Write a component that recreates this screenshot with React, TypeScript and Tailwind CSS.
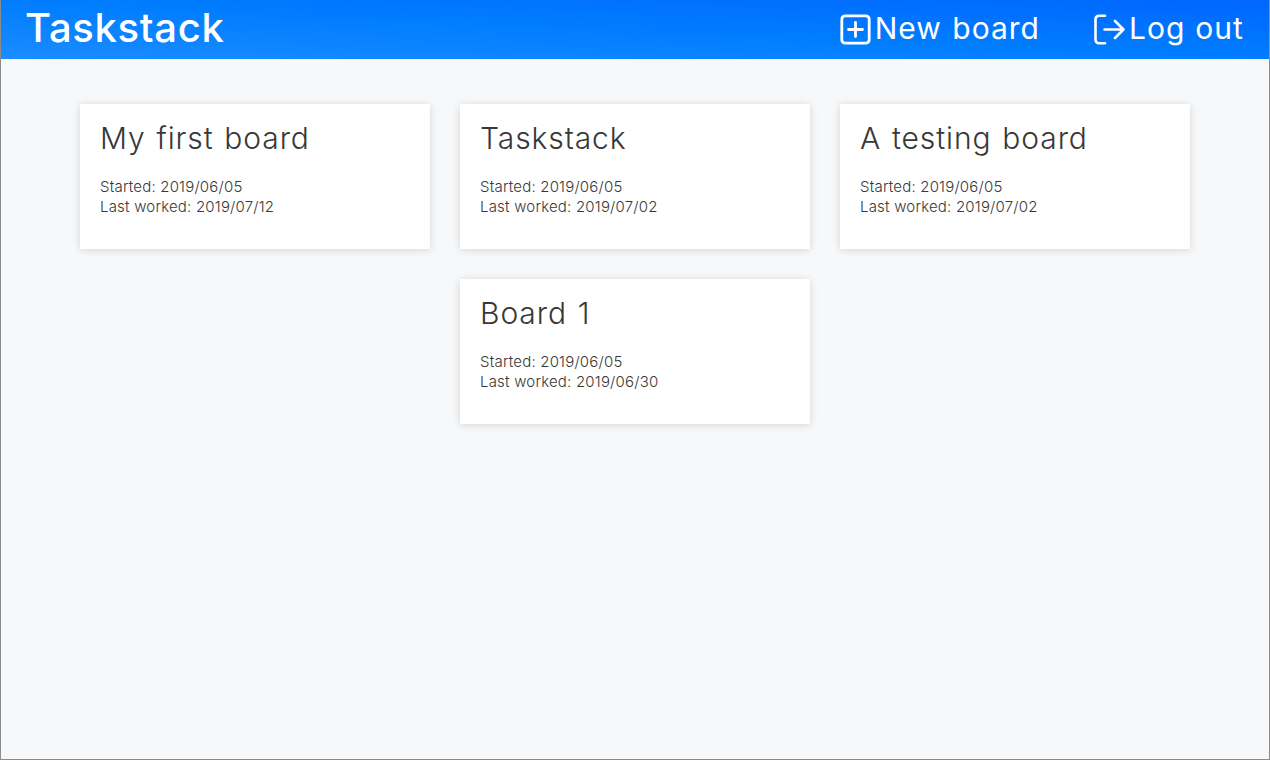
const boards = [
  { title: 'My first board', started: '2019/06/05', worked: '2019/07/12' },
  { title: 'Taskstack', started: '2019/06/05', worked: '2019/07/02' },
  { title: 'A testing board', started: '2019/06/05', worked: '2019/07/02' },
  { title: 'Board 1', started: '2019/06/05', worked: '2019/06/30' },
];

function PlusIcon() {
  return (
    <svg width="31" height="31" viewBox="0 0 31 31" fill="none" stroke="white" strokeWidth="2.8" strokeLinecap="round" strokeLinejoin="round">
      <rect x="1.8" y="1.8" width="27.4" height="27.4" rx="3.5" />
      <path d="M15.5 8.5v14M8.5 15.5h14" />
    </svg>
  );
}

function LogoutIcon() {
  return (
    <svg width="31" height="31" viewBox="0 0 31 31" fill="none" stroke="white" strokeWidth="2.6" strokeLinecap="round" strokeLinejoin="round">
      <path d="M11 1.7H5a3.5 3.5 0 0 0-3.5 3.5v20.6A3.5 3.5 0 0 0 5 29.3h6" />
      <path d="M10.5 15.5h19M21 7l8.5 8.5L21 24" />
    </svg>
  );
}

export default function App() {
  return (
    <div className="flex h-[760px] flex-col border-x border-b border-[#8c8c8c] bg-[#f7f8fa] font-['Inter',sans-serif]">
      <header className="flex h-[59px] items-center justify-between bg-[linear-gradient(to_top_right,#1a8cff,#007dff_50%,#0066ff)] pl-[24px] pr-[25px] text-white">
        <h1 className="mt-[-3px] text-[40px] font-[450] leading-none tracking-[0.7px]">Taskstack</h1>
        <nav className="flex items-center gap-[54px] text-[30px] font-normal leading-none">
          <a className="flex items-center gap-[4px]">
            <PlusIcon />
            <span className="mt-[-3px] tracking-[1px] [word-spacing:1px]">New board</span>
          </a>
          <a className="flex items-center gap-[4px]">
            <LogoutIcon />
            <span className="mt-[-3px] tracking-[1.1px]">Log out</span>
          </a>
        </nav>
      </header>
      <main className="mx-auto flex w-[1110px] flex-wrap justify-center gap-[30px] pt-[45px]">
        {boards.map((board) => (
          <div key={board.title} className="h-[145px] w-[350px] bg-white pl-[20px] pt-[15px] text-[#383838] shadow-[0_1px_8px_rgba(0,0,0,0.14)]">
            <h2 className="text-[30px] font-light leading-[38px] tracking-[0.9px] [word-spacing:1.5px]">{board.title}</h2>
            <p className="mt-[20px] text-[15px] font-light leading-[20px] tracking-[0.2px]">
              Started: {board.started}
              <br />
              Last worked: {board.worked}
            </p>
          </div>
        ))}
      </main>
    </div>
  );
}
